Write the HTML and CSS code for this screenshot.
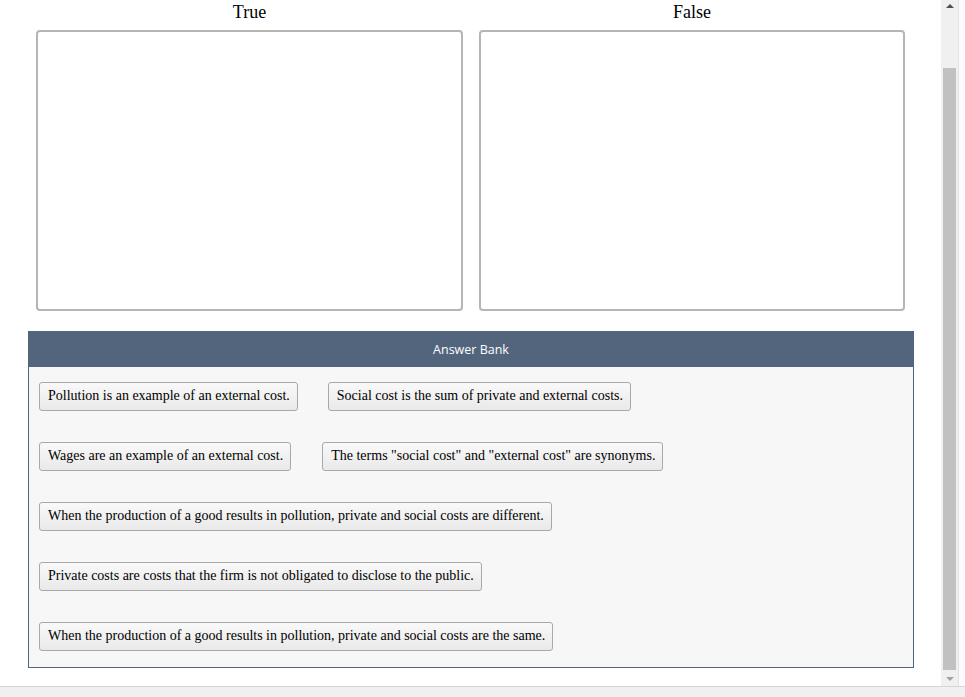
FILE: index.html
```html
<!DOCTYPE html>
<html>
<head>
<meta charset="utf-8">
<link rel="stylesheet" href="styles.css">
</head>
<body>
<div class="frame">
  <div class="viewport">
    <div class="main">
      <div class="columns">
        <div class="col col-true">
          <div class="col-title">True</div>
          <div class="dropbox"></div>
        </div>
        <div class="col col-false">
          <div class="col-title">False</div>
          <div class="dropbox"></div>
        </div>
      </div>
      <div class="bank">
        <div class="bank-head">Answer Bank</div>
        <div class="bank-body">
          <div class="row">
            <div class="chip">Pollution is an example of an external cost.</div>
            <div class="chip">Social cost is the sum of private and external costs.</div>
          </div>
          <div class="row">
            <div class="chip">Wages are an example of an external cost.</div>
            <div class="chip">The terms "social cost" and "external cost" are synonyms.</div>
          </div>
          <div class="row">
            <div class="chip">When the production of a good results in pollution, private and social costs are different.</div>
          </div>
          <div class="row">
            <div class="chip">Private costs are costs that the firm is not obligated to disclose to the public.</div>
          </div>
          <div class="row">
            <div class="chip">When the production of a good results in pollution, private and social costs are the same.</div>
          </div>
        </div>
      </div>
    </div>
    <div class="scrollbar">
      <div class="arrow arrow-up"></div>
      <div class="thumb"></div>
      <div class="arrow arrow-down"></div>
    </div>
    <div class="edge"></div>
  </div>
  <div class="bottom"></div>
</div>
</body>
</html>
```

FILE: styles.css
```css
html, body {
  margin: 0;
  padding: 0;
  background: #ffffff;
}
.frame {
  width: 965px;
  height: 697px;
  display: flex;
  flex-direction: column;
  overflow: hidden;
}
.viewport {
  display: flex;
  height: 687px;
}
.main {
  width: 942px;
  background: #ffffff;
  font-family: "Liberation Serif", "Times New Roman", serif;
}
.columns {
  display: flex;
  padding-left: 36px;
  gap: 16px;
}
.col {
  display: flex;
  flex-direction: column;
  align-items: center;
}
.col-true { width: 427px; }
.col-false { width: 426px; }
.col-title {
  font-size: 18px;
  line-height: 24px;
  height: 30px;
  color: #000;
  box-sizing: border-box;
}
.dropbox {
  width: 100%;
  height: 281px;
  box-sizing: border-box;
  border: 2px solid #b5b5b5;
  border-radius: 4px;
  background: #fff;
}
.bank {
  margin: 20px 0 0 28px;
  width: 886px;
  box-sizing: border-box;
  border: 1px solid #52657d;
  border-top: none;
}
.bank-head {
  background: #52657d;
  color: #ffffff;
  height: 36px;
  line-height: 37px;
  text-align: center;
  font-family: "Open Sans", "Noto Sans", sans-serif;
  font-size: 12.5px;
  margin: 0 -1px;
}
.bank-body {
  background: #f7f7f7;
  padding: 15px 10px 16px 10px;
  display: flex;
  flex-direction: column;
  gap: 31px;
}
.row {
  display: flex;
  gap: 30px;
}
.row:nth-child(2) { gap: 31px; }
.chip {
  height: 29px;
  box-sizing: border-box;
  border: 1px solid #a9a9a9;
  border-radius: 3px;
  background: linear-gradient(#f9f9f9, #e9e9e9);
  padding: 0 7px 0 8px;
  font-size: 14px;
  line-height: 26px;
  color: #000;
  white-space: nowrap;
}
.scrollbar {
  width: 17px;
  background: #f0f0f0;
  position: relative;
}
.thumb {
  position: absolute;
  left: 2px;
  width: 13px;
  top: 68px;
  height: 602px;
  background: #c1c1c1;
}
.arrow {
  position: absolute;
  left: 5px;
  width: 0;
  height: 0;
  border-left: 4px solid transparent;
  border-right: 4px solid transparent;
}
.arrow-up {
  top: 4px;
  border-bottom: 4px solid #505050;
}
.arrow-down {
  top: 677px;
  border-top: 4px solid #a3a3a3;
}
.edge {
  width: 6px;
  border-left: 1px solid #e2e2e2;
  background: #fbfbfb;
}
.bottom {
  height: 10px;
  border-top: 1px solid #d6d6d6;
  background: #f0f0f0;
}
```
